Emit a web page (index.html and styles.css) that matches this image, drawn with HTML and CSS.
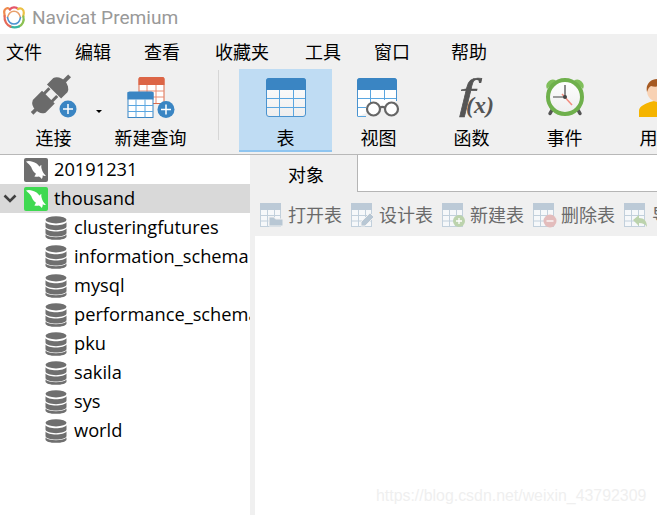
FILE: index.html
```html
<!DOCTYPE html>
<html lang="zh">
<head>
<meta charset="utf-8">
<title>Navicat Premium</title>
<link rel="stylesheet" href="styles.css">
</head>
<body>
<svg class="defs" width="0" height="0" aria-hidden="true">
  <defs>
    <linearGradient id="cell" x1="0" y1="0" x2="0" y2="1"><stop offset="0" stop-color="#fff"/><stop offset="1" stop-color="#eeeeee"/></linearGradient>
    <symbol id="dolphin" viewBox="0 0 24 24">
      <path fill="#fff" d="M2 3.500C4 2.500 6.500 2.800 8.500 3.800c3 .6 5.500 2.300 7 5 .3-1 1-1.500 2-1.500-.4 1.200-.3 2.500.2 3.800.8 3 2 5 4.300 6.700-1.300.3-2.400.1-3.300-.5.100 1.300-.1 2.500-.9 3.700-.9-1.300-1.600-2-3-2.500-1.700.5-3.200.4-4.600-.2 1-.7 1.500-1.600 1.600-2.800-2.600-1.600-3.800-4-4.600-6.500C6.200 7.300 4 5.500 2 3.500z"/>
    </symbol>
    <symbol id="db" viewBox="0 0 22 24">
      <g fill="#6f6f6f">
        <ellipse cx="11" cy="3.800" rx="10.500" ry="3.600"/>
        <path d="M.5 6.200c1.500 2 5.500 3 10.500 3s9-1 10.500-3v4.400c0 2-4.700 3.600-10.500 3.600S.5 12.600.5 10.600z"/>
        <path d="M.5 12.600c1.500 2 5.500 3 10.500 3s9-1 10.500-3V17c0 2-4.700 3.600-10.500 3.600S.5 19 .5 17z"/>
        <path d="M.5 18.600c1.500 1.800 5.500 2.700 10.500 2.700s9-.9 10.500-2.700v1.800c0 2-4.700 3.400-10.500 3.400S.5 22.400.5 20.400z"/>
      </g>
    </symbol>
    <symbol id="table-big" viewBox="0 0 40 39">
      <rect x=".5" y=".5" width="39" height="38" rx="2.500" fill="url(#cell)" stroke="#4a93cf"/>
      <path d="M0 12V3a3 3 0 0 1 3-3h34a3 3 0 0 1 3 3v9z" fill="#3a85c3"/>
      <path d="M13.500 12v26M27.500 12v26M1 20.500h38M1 29.500h38" stroke="#5aa6e0" fill="none"/>
    </symbol>
    <symbol id="table-small" viewBox="0 0 21 24">
      <rect x=".5" y=".5" width="20" height="23" fill="#f6f8fa" stroke="#c2d0dc"/>
      <rect width="21" height="7" fill="#bccad7"/>
      <path d="M7.500 7v16M14.500 7v16M1 12.500h19M1 18h19" stroke="#c2d0dc" fill="none"/>
    </symbol>
  </defs>
</svg>

<header class="titlebar">
  <svg class="logo" width="22" height="22" viewBox="0 0 22 22" fill="none" stroke-width="2.200" stroke-linecap="round">
    <path d="M7 3.500C4.500 .6 .8 3 1.200 6.500 1.400 8 1.700 9 1.600 10" stroke="#ee8a4c"/>
    <path d="M7 3.500C8.500 1 13 .6 15 3" stroke="#e5566a"/>
    <path d="M15 3c2.700-1.800 6 .4 5.800 3.800-.1 1.600-.6 2.600-.5 3.700" stroke="#ecc043"/>
    <path d="M20.300 10.500c1.400 4.300-.8 8.500-4.300 10" stroke="#8cc152"/>
    <path d="M16 20.500c-2.700 1-5.800 1-8.500.1" stroke="#38b5a0"/>
    <path d="M7.500 20.600C4 19.400 1 15 1.600 10" stroke="#e56a5a"/>
    <path d="M4.500 11.500C5.500 7.500 8 5.300 11 5.300s5.500 2.200 6.500 6.200" stroke="#e8a06c" stroke-width="1.500"/>
    <path d="M4.500 11.500c.8 4 3.200 6.500 6.500 6.500s5.700-2.500 6.500-6.500" stroke="#4d93d1" stroke-width="1.500"/>
  </svg>
  <span class="app-name">Navicat Premium</span>
</header>

<nav class="menubar">
  <span>文件</span><span>编辑</span><span>查看</span><span>收藏夹</span><span>工具</span><span>窗口</span><span>帮助</span>
</nav>

<section class="toolbar">
  <div class="tool tool-connect">
    <div class="tool-icon">
      <svg width="48" height="44" viewBox="0 0 48 44">
        <g transform="translate(20.500 17) rotate(-45)" fill="#6a6a6a">
          <path d="M-26-1.800h11v3.600h-11z"/>
          <path d="M-16-9h13v18h-13a8 9 0 0 1-5-9 8 9 0 0 1 5-9z"/>
          <path d="M-4-7h8v3h-8zM-4 4h8v3h-8z"/>
          <path d="M5-10h9a8 10 0 0 1 6 10 8 10 0 0 1-6 10H5z"/>
          <path d="M18-2h9v4h-9z"/>
        </g>
        <circle cx="38" cy="31" r="8.500" fill="#3a85c3"/>
        <path d="M33 31h10M38 26v10" stroke="#fff" stroke-width="1.500"/>
      </svg>
    </div>
    <span>连接</span>
    <i class="caret"></i>
  </div>
  <div class="tool tool-query">
    <div class="tool-icon">
      <svg width="50" height="44" viewBox="0 0 50 44">
        <rect x="13" y="-.5" width="25" height="26" rx="1.500" fill="#fff" stroke="#dc6a4a"/>
        <path d="M12.500 7V1a2 2 0 0 1 2-2h22a2 2 0 0 1 2 2v6z" fill="#dc6546"/>
        <path d="M21 7v18M30 7v18M13 13h25M13 19h25" stroke="#e98c72" fill="none"/>
        <rect x="2" y="14.500" width="25" height="25" fill="#fff" stroke="#3a85c3"/>
        <path d="M1.500 21.500v-6a2 2 0 0 1 2-2h22a2 2 0 0 1 2 2v6z" fill="#3a85c3"/>
        <path d="M10 21.500v18M19 21.500v18M2 27.500h25M2 33.500h25" stroke="#5aa6e0" fill="none"/>
        <circle cx="40" cy="31.500" r="8.500" fill="#3a85c3"/>
        <path d="M35 31.500h10M40 26.500v10" stroke="#fff" stroke-width="1.500"/>
      </svg>
    </div>
    <span>新建查询</span>
  </div>
  <div class="toolbar-sep"></div>
  <div class="tool tool-active">
    <div class="tool-icon"><svg width="40" height="39"><use href="#table-big"/></svg></div>
    <span>表</span>
  </div>
  <div class="tool">
    <div class="tool-icon">
      <svg width="44" height="39" viewBox="0 0 44 39">
        <path d="M.5 38.500V3a2.500 2.500 0 0 1 2.500-2.500h34A2.500 2.500 0 0 1 39.500 3v20" fill="#fff" stroke="#4a93cf"/>
        <path d="M0 12V3a3 3 0 0 1 3-3h34a3 3 0 0 1 3 3v9z" fill="#3a85c3"/>
        <path d="M13.500 12v15M27.500 12v10M1 20.500h38M1 29.500h8M1 38.500h8" stroke="#5aa6e0" fill="none"/>
        <g fill="#fff" stroke="#666" stroke-width="2.200">
          <circle cx="16.500" cy="31" r="6.500"/>
          <circle cx="34.500" cy="31" r="6.500"/>
        </g>
        <path d="M23 29.500c1.500-1 3-1 5 0" fill="none" stroke="#666" stroke-width="2.200"/>
      </svg>
    </div>
    <span>视图</span>
  </div>
  <div class="tool">
    <div class="tool-icon">
      <svg width="46" height="44" viewBox="0 0 46 44">
        <text class="fx-f" transform="translate(10 30) scale(1.350 1)">f</text>
        <text class="fx-x" x="17" y="35">(x)</text>
      </svg>
    </div>
    <span>函数</span>
  </div>
  <div class="tool">
    <div class="tool-icon">
      <svg width="40" height="40" viewBox="0 0 40 40">
        <path d="M2 11a6.500 6.500 0 0 1 9-8.500zM38 11a6.500 6.500 0 0 0-9-8.500z" fill="#7fbf5a"/>
        <path d="M7 32l-2 3.500M33 32l2 3.500" stroke="#555" stroke-width="3.500" stroke-linecap="round"/>
        <circle cx="20" cy="19" r="17" fill="url(#cell)" stroke="#6fb04c" stroke-width="4"/>
        <path d="M17 16l10 11" stroke="#f28b7d" stroke-width="1.500"/>
        <path d="M20 19V7M20 19H8" stroke="#444" stroke-width="1.200"/>
        <circle cx="20" cy="19" r="2" fill="#444"/>
      </svg>
    </div>
    <span>事件</span>
  </div>
  <div class="tool">
    <div class="tool-icon">
      <svg width="40" height="40" viewBox="0 0 40 40">
        <path d="M1 39v-6c0-5 6-7 11-9l8-2 8 2c5 2 11 4 11 9v6z" fill="#f5b400"/>
        <circle cx="20" cy="13" r="11" fill="#f8d2b4"/>
        <path d="M9 14C7 5 14 0 21 1c6 .5 10 5 10 12-2-4-4-6-6-6-4 2-9 2-12 1-2 1-3 3-4 6z" fill="#a65a22"/>
      </svg>
    </div>
    <span>用户</span>
  </div>
</section>

<main class="workspace">
  <aside class="tree">
    <div class="row conn">
      <span class="chev"></span>
      <span class="conn-icon"><svg width="24" height="24"><use href="#dolphin"/></svg></span>
      <span class="label">20191231</span>
    </div>
    <div class="row conn row-selected">
      <span class="chev"><svg width="14" height="9" viewBox="0 0 14 9"><path d="M1.500 1.500L7 7l5.500-5.500" fill="none" stroke="#404040" stroke-width="2.600"/></svg></span>
      <span class="conn-icon conn-on"><svg width="24" height="24"><use href="#dolphin"/></svg></span>
      <span class="label">thousand</span>
    </div>
    <div class="row db"><svg width="22" height="24"><use href="#db"/></svg><span class="label">clusteringfutures</span></div>
    <div class="row db"><svg width="22" height="24"><use href="#db"/></svg><span class="label">information_schema</span></div>
    <div class="row db"><svg width="22" height="24"><use href="#db"/></svg><span class="label">mysql</span></div>
    <div class="row db"><svg width="22" height="24"><use href="#db"/></svg><span class="label">performance_schema</span></div>
    <div class="row db"><svg width="22" height="24"><use href="#db"/></svg><span class="label">pku</span></div>
    <div class="row db"><svg width="22" height="24"><use href="#db"/></svg><span class="label">sakila</span></div>
    <div class="row db"><svg width="22" height="24"><use href="#db"/></svg><span class="label">sys</span></div>
    <div class="row db"><svg width="22" height="24"><use href="#db"/></svg><span class="label">world</span></div>
  </aside>
  <section class="panel">
    <div class="tabs">
      <div class="tab">对象</div>
      <div class="tab-rest"></div>
    </div>
    <div class="actions">
      <div class="action">
        <svg width="24" height="24" viewBox="0 0 24 24">
          <use href="#table-small" width="21" height="24"/>
          <path d="M9 23v-9h5l1.500 2H23v7z" fill="#b8c7d4" stroke="#f0f0f0"/>
        </svg>
        <span>打开表</span>
      </div>
      <div class="action">
        <svg width="24" height="24" viewBox="0 0 24 24">
          <use href="#table-small" width="21" height="24"/>
          <path d="M10 19l9-9 4 4-9 9h-4z" fill="#b8c7d4" stroke="#f0f0f0"/>
        </svg>
        <span>设计表</span>
      </div>
      <div class="action">
        <svg width="24" height="24" viewBox="0 0 24 24">
          <use href="#table-small" width="21" height="24"/>
          <circle cx="17" cy="18" r="6" fill="#bcd3ad"/>
          <path d="M14 18h6M17 15v6" stroke="#fff" stroke-width="1.300"/>
        </svg>
        <span>新建表</span>
      </div>
      <div class="action">
        <svg width="24" height="24" viewBox="0 0 24 24">
          <use href="#table-small" width="21" height="24"/>
          <circle cx="17" cy="18" r="6.500" fill="#e3bcbc"/>
          <path d="M13.500 18h7" stroke="#fff" stroke-width="1.300"/>
        </svg>
        <span>删除表</span>
      </div>
      <div class="action">
        <svg width="24" height="24" viewBox="0 0 24 24">
          <use href="#table-small" width="21" height="24"/>
          <path d="M9 17l6-5v3c5 0 8 3 8 9-2-3-4-4-8-4v3z" fill="#bcd3ad"/>
        </svg>
        <span>导入向导</span>
      </div>
    </div>
    <div class="content"></div>
  </section>
</main>
<div class="watermark">https://blog.csdn.net/weixin_43792309</div>
</body>
</html>
```
FILE: styles.css
```css
* { box-sizing: border-box; }
html, body { margin: 0; padding: 0; }
body {
  width: 657px;
  height: 515px;
  overflow: hidden;
  position: relative;
  display: flex;
  flex-direction: column;
  background: #f0f0f0;
  font-family: "Open Sans", "Noto Sans CJK SC", sans-serif;
  color: #000;
}
.defs { position: absolute; }
svg { overflow: visible; }

.titlebar {
  height: 34px;
  background: #fff;
  display: flex;
  align-items: center;
  padding-left: 3px;
  gap: 7px;
  flex: none;
}
.app-name { font: 19.100px Roboto, sans-serif; color: #999; }

.menubar {
  height: 35px;
  flex: none;
  display: grid;
  grid-template-columns: 69px 69px 71px 90px 69px 77px auto;
  align-items: center;
  padding: 0 0 2px 6px;
  font-size: 18px;
  font-family: "Noto Sans CJK SC", sans-serif;
}

.toolbar {
  height: 86px;
  flex: none;
  display: flex;
  padding-left: 7px;
  border-bottom: 1px solid #b8b8b8;
  overflow: hidden;
  font-family: "Noto Sans CJK SC", sans-serif;
  font-size: 18px;
}
.tool {
  width: 93px;
  height: 83px;
  flex: none;
  display: flex;
  flex-direction: column;
  align-items: center;
  position: relative;
}
.tool > span { line-height: 26px; margin-top: 1px; white-space: nowrap; }
.tool-icon {
  height: 54px;
  padding-top: 9px;
  display: flex;
  justify-content: center;
  align-items: flex-start;
}
.tool-connect { margin-right: 4px; }
.tool-active {
  background: #bfdcf3;
  border-bottom: 2px solid #8fc5f0;
}
.toolbar-sep {
  width: 1px;
  height: 70px;
  margin: 1px 20px 0 21px;
  background: #d6d6d6;
  flex: none;
}
.caret {
  position: absolute;
  left: 89px;
  top: 41px;
  border-left: 3px solid transparent;
  border-right: 3px solid transparent;
  border-top: 3px solid #000;
}
.fx-f { font: italic 400 43px "Liberation Serif", serif; fill: #555; stroke: #555; stroke-width: .6px; }
.fx-x { font: italic 700 24px "Liberation Serif", serif; fill: #555; }

.workspace { flex: 1; display: flex; min-height: 0; }
.tree {
  width: 250px;
  flex: none;
  background: #fff;
  overflow: hidden;
}
.row {
  height: 29px;
  display: flex;
  align-items: center;
  font-size: 18.250px;
  white-space: nowrap;
  overflow: hidden;
}
.label { margin-top: -2px; }
.row-selected { background: #d9d9d9; }
.chev { width: 24px; flex: none; padding-left: 3px; display: flex; }
.conn-icon {
  width: 24px;
  height: 24px;
  flex: none;
  border-radius: 2px;
  background: #6e6e6e;
  display: flex;
}
.conn-on { background: #3fd951; }
.conn .label { margin-left: 6px; }
.db { padding-left: 45px; }
.db svg { flex: none; }
.db .label { margin-left: 7px; }

.panel { flex: 1; display: flex; flex-direction: column; min-width: 0; }
.tabs { height: 37px; display: flex; flex: none; }
.tab {
  width: 107px;
  display: flex;
  align-items: center;
  justify-content: center;
  padding-left: 5px;
  font-size: 18px;
  font-family: "Noto Sans CJK SC", sans-serif;
}
.tab-rest {
  flex: 1;
  background: #fff;
  border-left: 1px solid #b5b5b5;
  border-bottom: 1px solid #b5b5b5;
}
.actions {
  height: 44px;
  flex: none;
  display: flex;
  padding: 2px 0 0 10px;
  align-items: center;
  overflow: hidden;
  font-family: "Noto Sans CJK SC", sans-serif;
}
.action {
  width: 91px;
  flex: none;
  display: flex;
  align-items: center;
  gap: 4px;
  font-size: 18px;
  color: #6a6a6a;
  white-space: nowrap;
}
.action span { margin-top: -2px; }
.action svg { flex: none; }
.content { flex: 1; background: #fff; margin-left: 5px; }

.watermark {
  position: absolute;
  left: 376px;
  top: 487px;
  font: 15.900px "Liberation Sans", sans-serif;
  color: #efefef;
}
```
